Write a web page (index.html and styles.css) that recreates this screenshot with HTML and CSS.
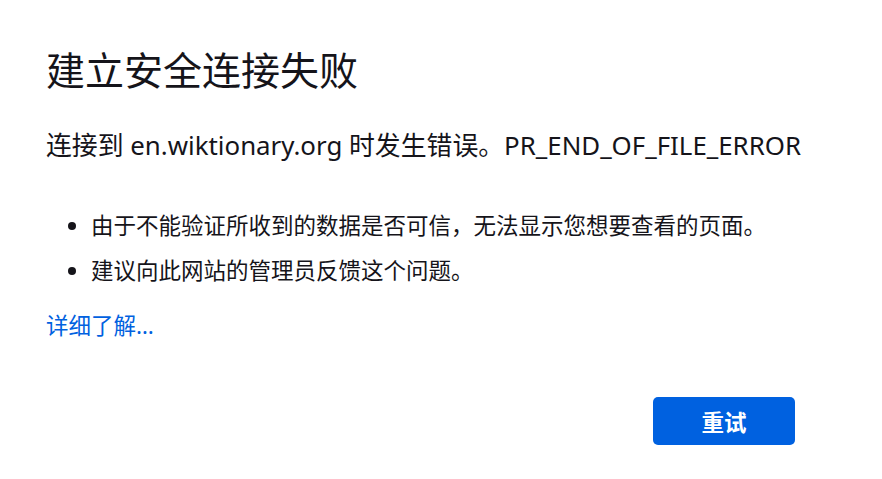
FILE: index.html
```html
<!DOCTYPE html>
<html lang="zh-CN">
<head>
<meta charset="utf-8">
<title>建立安全连接失败</title>
<link rel="stylesheet" href="styles.css">
</head>
<body>
<main class="page">
  <h1 class="title">建立安全连接失败</h1>
  <p class="intro">连接到 en.wiktionary.org 时发生错误。PR_END_OF_FILE_ERROR</p>
  <ul class="reasons">
    <li>由于不能验证所收到的数据是否可信，无法显示您想要查看的页面。</li>
    <li>建议向此网站的管理员反馈这个问题。</li>
  </ul>
  <a class="learn" href="#">详细了解…</a>
  <div class="actions">
    <button class="retry" type="button">重试</button>
  </div>
</main>
</body>
</html>
```

FILE: styles.css
```css
html, body {
  margin: 0;
  padding: 0;
  background: #ffffff;
}
body {
  font-family: "Noto Sans", "Noto Sans CJK SC", sans-serif;
  color: #15141a;
}
.page {
  width: 749px;
  padding: 44px 0 0 46px;
  display: flex;
  flex-direction: column;
}
.title {
  margin: 0;
  font-size: 39px;
  font-weight: 400;
  line-height: 52px;
}
.intro {
  margin: 31px 0 0;
  font-size: 25.85px;
  line-height: 36px;
  white-space: nowrap;
}
.reasons {
  margin: 40px 0 0;
  padding-left: 45px;
  font-size: 22.5px;
  line-height: 45px;
}
.learn {
  margin-top: 15px;
  font-size: 22.5px;
  line-height: 36px;
  color: #0061e0;
  text-decoration: none;
  align-self: flex-start;
}
.actions {
  margin-top: 53px;
  display: flex;
  justify-content: flex-end;
}
.retry {
  width: 142px;
  height: 48px;
  border: none;
  border-radius: 5px;
  background: #0061e0;
  color: #ffffff;
  font-family: "Noto Sans", "Noto Sans CJK SC", sans-serif;
  font-size: 22.5px;
  font-weight: 700;
}
```
